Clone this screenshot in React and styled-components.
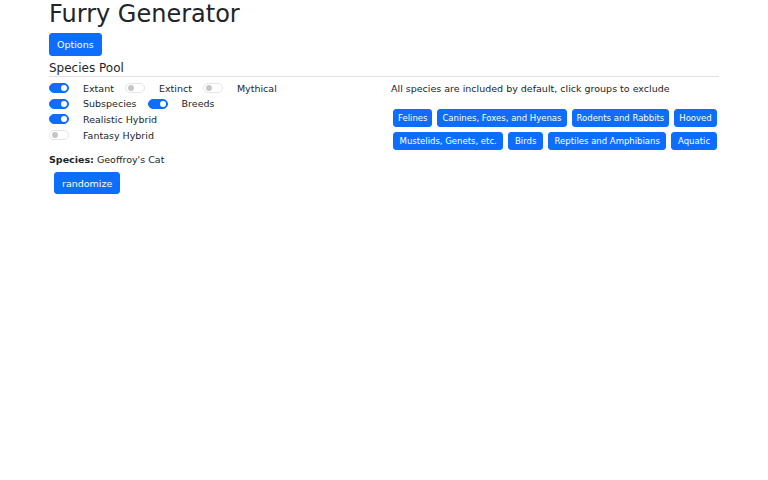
import React from "react";
import styled, { createGlobalStyle } from "styled-components";

const Global = createGlobalStyle`
  html, body { margin: 0; padding: 0; background: #fff; }
  body { font-family: "DejaVu Sans", sans-serif; color: #212529; }
`;

const Page = styled.div`
  width: 670px;
  margin-left: 49px;
`;

const Title = styled.h1`
  margin: 0;
  font-size: 24px;
  font-weight: 400;
  line-height: 28.8px;
`;

const Btn = styled.button`
  font-family: "DejaVu Sans", sans-serif;
  font-size: 9.5px;
  line-height: 13px;
  padding: 4px 7px;
  color: #fff;
  background: #0d6efd;
  border: 1px solid #0d6efd;
  border-radius: 3px;
  cursor: pointer;
`;

const OptionsBtn = styled(Btn)`
  margin-top: 4px;
  display: block;
`;

const GroupBtn = styled(Btn)`
  flex: 1 1 auto;
  font-size: 8.5px;
  line-height: 12px;
  padding: 2px 4px;
  white-space: nowrap;
`;

const SectionHead = styled.div`
  margin-top: 5px;
  font-size: 12px;
  line-height: 15px;
  border-bottom: 1px solid #dee2e6;
`;

const Grid = styled.div`
  display: grid;
  grid-template-columns: 330px 1fr;
  gap: 12px;
  margin-top: 3.5px;
`;

const ToggleRow = styled.div`
  display: flex;
  align-items: center;
  height: 15.67px;
`;

const Toggle = styled.label`
  display: flex;
  align-items: center;
  margin-right: 11px;
  font-size: 9.5px;
`;

const Switch = styled.span`
  position: relative;
  width: 20px;
  height: 10px;
  box-sizing: border-box;
  border-radius: 5px;
  margin-right: 14px;
  background: ${(p) => (p.$on ? "#0d6efd" : "#fff")};
  border: 1px solid ${(p) => (p.$on ? "#0d6efd" : "#e3e5e8")};
  &::after {
    content: "";
    position: absolute;
    top: 1px;
    left: ${(p) => (p.$on ? "11px" : "2px")};
    width: 6px;
    height: 6px;
    border-radius: 50%;
    background: ${(p) => (p.$on ? "#fff" : "#c4c6c9")};
  }
`;

const SpeciesLine = styled.div`
  font-size: 9.5px;
  margin-top: 10px;
  line-height: 13px;
`;

const RandomBtn = styled(Btn)`
  margin: 6.5px 0 0 5px;
  padding: 3.5px 7px;
`;

const Note = styled.div`
  font-size: 9.5px;
  line-height: 13px;
  padding-top: 1.5px;
`;

const Groups = styled.div`
  display: flex;
  flex-direction: column;
  gap: 5px;
  margin-top: 14px;
  padding: 0 3px 0 2px;
`;

const GroupRow = styled.div`
  display: flex;
  gap: 5px;
`;

const toggles = [
  [["Extant", true], ["Extinct", false], ["Mythical", false]],
  [["Subspecies", true], ["Breeds", true]],
  [["Realistic Hybrid", true]],
  [["Fantasy Hybrid", false]],
];

const groupRows = [
  ["Felines", "Canines, Foxes, and Hyenas", "Rodents and Rabbits", "Hooved"],
  ["Mustelids, Genets, etc.", "Birds", "Reptiles and Amphibians", "Aquatic"],
];

export default function App() {
  return (
    <Page>
      <Global />
      <Title>Furry Generator</Title>
      <OptionsBtn>Options</OptionsBtn>
      <SectionHead>Species Pool</SectionHead>
      <Grid>
        <div>
          {toggles.map((row, i) => (
            <ToggleRow key={i}>
              {row.map(([label, on]) => (
                <Toggle key={label}>
                  <Switch $on={on} />
                  {label}
                </Toggle>
              ))}
            </ToggleRow>
          ))}
          <SpeciesLine>
            <b>Species:</b> Geoffroy's Cat
          </SpeciesLine>
          <RandomBtn>randomize</RandomBtn>
        </div>
        <div>
          <Note>All species are included by default, click groups to exclude</Note>
          <Groups>
            {groupRows.map((row, i) => (
              <GroupRow key={i}>
                {row.map((g) => (
                  <GroupBtn key={g}>{g}</GroupBtn>
                ))}
              </GroupRow>
            ))}
          </Groups>
        </div>
      </Grid>
    </Page>
  );
}
